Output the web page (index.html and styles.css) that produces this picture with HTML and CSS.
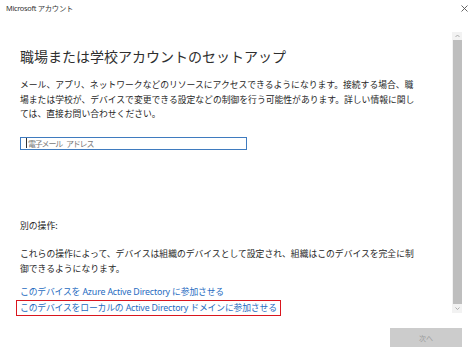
FILE: index.html
```html
<!DOCTYPE html>
<html lang="ja">
<head>
<meta charset="utf-8">
<link rel="stylesheet" href="styles.css">
</head>
<body>
<div class="window">
  <div class="titlebar">
    <span class="title">Microsoft アカウント</span>
    <svg class="close" width="7" height="7" viewBox="0 0 7 7"><path d="M0.5 0.5 L6.5 6.5 M6.5 0.5 L0.5 6.5" stroke="#555" stroke-width="0.9" fill="none"/></svg>
  </div>
  <div class="main">
    <div class="content">
      <h1 class="heading">職場または学校アカウントのセットアップ</h1>
      <p class="text intro">メール、アプリ、ネットワークなどのリソースにアクセスできるようになります。接続する場合、職場または学校が、デバイスで変更できる設定などの制御を行う可能性があります。詳しい情報に関しては、直接お問い合わせください。</p>
      <div class="input"><span class="caret"></span><span class="placeholder">電子メール</span><span class="placeholder gap">アドレス</span></div>
      <div class="spacer"></div>
      <p class="text label">別の操作:</p>
      <p class="text note">これらの操作によって、デバイスは組織のデバイスとして設定され、組織はこのデバイスを完全に制御できるようになります。</p>
      <div class="links">
        <a class="link">このデバイスを Azure Active Directory に参加させる</a>
        <a class="link highlighted">このデバイスをローカルの Active Directory ドメインに参加させる</a>
      </div>
    </div>
    <div class="scrollbar">
      <svg class="arrow" width="9" height="8" viewBox="0 0 9 8"><path d="M2.5 5 L4.5 3 L6.5 5" stroke="#9a9a9a" stroke-width="0.8" fill="none"/></svg>
      <div class="thumb"></div>
      <svg class="arrow" width="9" height="9" viewBox="0 0 9 9"><path d="M2.5 3.5 L4.5 5.5 L6.5 3.5" stroke="#9a9a9a" stroke-width="0.8" fill="none"/></svg>
    </div>
  </div>
  <div class="footer">
    <button class="next">次へ</button>
  </div>
</div>
</body>
</html>
```
FILE: styles.css
```css
html, body {
  margin: 0;
  padding: 0;
  background: #ffffff;
}
body {
  font-family: "Noto Sans", "Noto Sans CJK JP", sans-serif;
  color: #2b2b2b;
}
.window {
  width: 474px;
  height: 356px;
  display: flex;
  flex-direction: column;
  overflow: hidden;
}
.titlebar {
  height: 16px;
  display: flex;
  align-items: center;
  justify-content: space-between;
  padding: 0 6px 0 6px;
  margin-bottom: 16px;
}
.title {
  font-size: 7.4px;
  color: #333;
  letter-spacing: -0.3px;
  line-height: 10px;
}
.close {
  margin-top: 1px;
}
.main {
  display: flex;
  height: 281px;
}
.content {
  flex: 1;
  padding-left: 20px;
  padding-top: 14px;
  display: flex;
  flex-direction: column;
}
.heading {
  margin: 0;
  font-weight: normal;
  font-size: 14px;
  line-height: 20px;
  color: #2e2e2e;
  font-family: "Noto Sans CJK JP", sans-serif;
}
.text {
  margin: 0;
  font-size: 8.8px;
  line-height: 14.5px;
  font-family: "Noto Sans CJK JP", sans-serif;
  color: #262626;
}
.intro {
  width: 400px;
  margin-top: 12px;
}
.input {
  width: 220px;
  height: 16px;
  border: 1.5px solid #3f7bbf;
  margin-top: 15px;
  display: flex;
  align-items: center;
  padding-left: 5px;
  box-sizing: content-box;
}
.caret {
  width: 1px;
  height: 10px;
  background: #333;
  margin-right: 1px;
}
.placeholder {
  font-family: "Noto Sans CJK JP", sans-serif;
  font-size: 8px;
  letter-spacing: -1.2px;
  color: #7a7a7a;
}
.gap {
  margin-left: 4px;
}
.spacer {
  flex: 0 0 69px;
}
.label {
  margin-bottom: 14px;
}
.note {
  width: 400px;
}
.links {
  margin-top: 8px;
  display: flex;
  flex-direction: column;
  align-items: flex-start;
}
.link {
  font-family: "Noto Sans", "Noto Sans CJK JP", sans-serif;
  font-size: 8.8px;
  line-height: 16px;
  color: #1e6bbf;
  letter-spacing: -0.15px;
}
.highlighted {
  margin-left: -4px;
  padding: 1px 3px 0 3px;
  border: 1.5px solid #d9161e;
  line-height: 13px;
}
.scrollbar {
  width: 10px;
  margin-right: 12px;
  background: #f2f2f2;
  display: flex;
  flex-direction: column;
  align-items: center;
}
.arrow {
  flex: none;
}
.thumb {
  flex: 1;
  width: 9px;
  background: #bebebe;
}
.footer {
  display: flex;
  justify-content: flex-end;
  padding-right: 12px;
  padding-top: 15px;
}
.next {
  width: 72px;
  height: 19px;
  border: none;
  background: #cccccc;
  color: #9a9a9a;
  font-family: "Noto Sans CJK JP", sans-serif;
  font-size: 7px;
  padding: 0;
}
```
